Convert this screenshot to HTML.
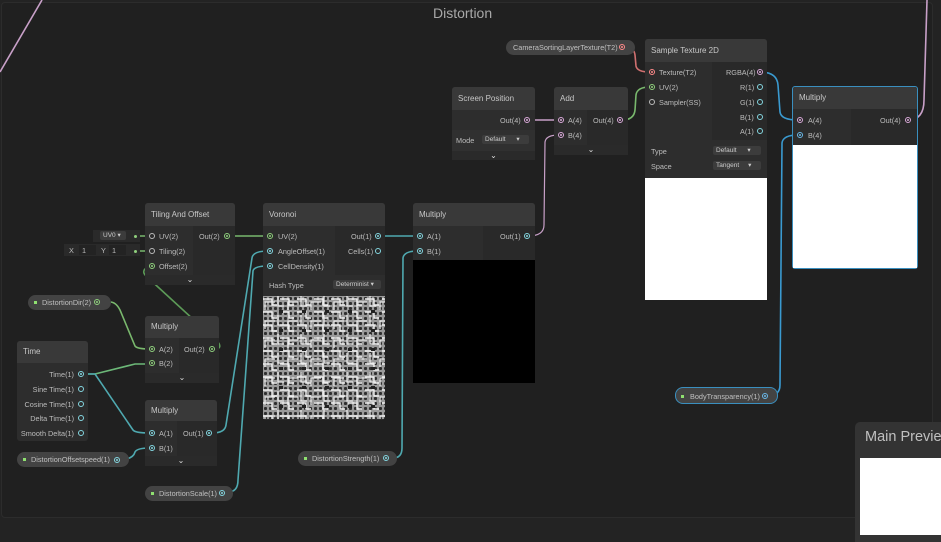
<!DOCTYPE html>
<html><head><meta charset="utf-8"><style>
*{margin:0;padding:0;box-sizing:border-box}
body{width:941px;height:535px;background:#232323;position:relative;overflow:hidden;font-family:"Liberation Sans",sans-serif;color:#bdbdbd}
.a{position:absolute}
.grp{left:1px;top:2px;width:932px;height:516px;background:#202020;border:1px solid #2c2c2c;border-radius:4px}
.bx{position:absolute;background:#2d2d2d;border-radius:3px}
.hd{position:absolute;background:#393939;font-size:8px;color:#c8c8c8;padding-left:6px;border-radius:3px 3px 0 0}
.r{position:absolute;background:#292929}
.t{position:absolute;font-size:7.3px;color:#bcbcbc;white-space:nowrap;line-height:9px}
.tr{text-align:right}
.p{position:absolute;width:6px;height:6px;border-radius:50%;border:1px solid #84e4e7}
.p.f::after{content:"";position:absolute;left:1px;top:1px;width:2px;height:2px;border-radius:50%;background:currentColor}
.g{border-color:#8fd07d;color:#8fd07d}.c{border-color:#84d6e0;color:#84d6e0}.k{border-color:#d8a8d8;color:#d8a8d8}.rd{border-color:#ff8a8a;color:#ff8a8a}.w{border-color:#bbb}
.cb{position:absolute;background:#2a2a2a;font-size:8px;color:#ddd;text-align:center;line-height:10px}
.pill{position:absolute;background:#434343;border-radius:8px;font-size:7.3px;color:#c0c0c0;white-space:nowrap}
.dd{position:absolute;background:#3c3c3c;font-size:6.5px;color:#ccc;padding-left:3px;line-height:9px;border-radius:2px}
</style></head><body>
<div class="a grp"></div>
<div class="a" style="left:433px;top:5px;font-size:14px;color:#a8a8a8">Distortion</div>

<svg class="a" style="left:0;top:0" width="941" height="535" fill="none" stroke-width="1.6">
<path d="M42 0 L0 72" stroke="#c8a0c8"/>
<path d="M908 120 Q924 120 924 100 L927 0" stroke="#c8a0c8"/>
<path d="M229 236 L268 236" stroke="#79b86d"/>
<path d="M127 236 L150 236 M127 251 L150 251" stroke="#79b86d"/>
<path d="M150 266 Q140 270 146 276 L218 342 Q223 349 214 349" stroke="#5c9a57"/>
<path d="M110 302 Q116 302 120 310 L135 346 Q137 349 150 349" stroke="#79b86d"/>
<path d="M82 374 L95 374 L135 364 L150 364" stroke="#6cb878"/>
<path d="M82 374 L95 374 L133 430 Q135 433 150 433" stroke="#4fa9b0"/>
<path d="M117 460 Q133 460 135 452 Q137 448 150 448" stroke="#4fa9b0"/>
<path d="M212 433 Q225 433 226 425 L252 258 Q253 251 268 251" stroke="#4fa9b0"/>
<path d="M228 492 Q238 492 238 480 L253 271 Q254 266 268 266" stroke="#4fa9b0"/>
<path d="M380 236 L418 236" stroke="#4fa9b0"/>
<path d="M393 458 Q402 458 402 448 L403 258 Q404 251 418 251" stroke="#4fa9b0"/>
<path d="M528 236 Q544 236 544 225 L545 142 Q546 135 559 135" stroke="#c8a0c8" stroke-width="1.2"/>
<path d="M528 120 L559 120" stroke="#c8a0c8"/>
<path d="M622 120 Q634 120 635 110 L636 95 Q637 87 650 87" stroke="#79b86d"/>
<path d="M625 47 Q634 47 635 55 L636 66 Q637 72 650 72" stroke="#d07070"/>
<path d="M760 72 Q777 72 778 85 L780 112 Q781 120 798 120" stroke="#3a9ad0"/>
<path d="M767 396 Q780 396 780 385 L782 143 Q783 135 798 135" stroke="#3a9ad0"/>
</svg>

<!-- Tiling and offset -->
<div class="bx" style="left:145px;top:203px;width:90px;height:82px"></div>
<div class="hd" style="left:145px;top:203px;width:90px;height:23px;line-height:23px">Tiling And Offset</div>
<div class="r" style="left:193px;top:226px;width:42px;height:49px"></div>
<div class="cb" style="left:145px;top:275px;width:90px;height:10px">⌄</div>
<div class="p w g" style="left:149px;top:233px"></div><div class="t" style="left:159px;top:232px">UV(2)</div>
<div class="p w g" style="left:149px;top:248px"></div><div class="t" style="left:159px;top:247px">Tiling(2)</div>
<div class="p f g" style="left:149px;top:263px"></div><div class="t" style="left:159px;top:262px">Offset(2)</div>
<div class="t" style="left:199px;top:232px">Out(2)</div><div class="p f g" style="left:224px;top:233px"></div>
<div class="a" style="left:93px;top:230px;width:47px;height:12px;background:#2a2a2a"></div>
<div class="dd" style="left:100px;top:231px;width:26px">UV0 ▾</div>
<div class="a" style="left:134px;top:235px;width:3px;height:3px;background:#8fd07d;border-radius:50%"></div>
<div class="a" style="left:64px;top:244px;width:76px;height:12px;background:#2a2a2a"></div>
<div class="t" style="left:69px;top:246px">X</div><div class="a" style="left:79px;top:245px;width:17px;height:10px;background:#232323"></div><div class="t" style="left:82px;top:246px">1</div>
<div class="t" style="left:101px;top:246px">Y</div><div class="a" style="left:109px;top:245px;width:17px;height:10px;background:#232323"></div><div class="t" style="left:112px;top:246px">1</div>
<div class="a" style="left:134px;top:250px;width:3px;height:3px;background:#8fd07d;border-radius:50%"></div>

<!-- Voronoi -->
<div class="bx" style="left:263px;top:203px;width:122px;height:217px"></div>
<div class="hd" style="left:263px;top:203px;width:122px;height:23px;line-height:23px">Voronoi</div>
<div class="r" style="left:335px;top:226px;width:50px;height:49px"></div>
<div class="p f c" style="left:267px;top:233px;border-color:#8fd07d;color:#8fd07d"></div><div class="t" style="left:278px;top:232px">UV(2)</div>
<div class="p f c" style="left:267px;top:248px"></div><div class="t" style="left:278px;top:247px">AngleOffset(1)</div>
<div class="p f c" style="left:267px;top:263px"></div><div class="t" style="left:278px;top:262px">CellDensity(1)</div>
<div class="t" style="left:351px;top:232px">Out(1)</div><div class="p f c" style="left:375px;top:233px"></div>
<div class="t" style="left:348px;top:247px">Cells(1)</div><div class="p c" style="left:375px;top:248px"></div>
<div class="t" style="left:269px;top:281px">Hash Type</div>
<div class="dd" style="left:333px;top:280px;width:48px">Determinist ▾</div>
<svg class="a" style="left:263px;top:296px" width="122" height="123">
<defs>
<pattern id="v" width="5" height="5" patternUnits="userSpaceOnUse"><rect width="5" height="5" fill="#9a9a9a"/><rect x="1" y="1" width="3" height="3" rx="1" fill="#2e2e2e"/></pattern>
<pattern id="v2" width="17" height="13" patternUnits="userSpaceOnUse"><path d="M0 3 L9 3 L9 9 L14 9" stroke="#f2f2f2" stroke-width="1.4" fill="none"/></pattern>
<pattern id="v3" width="23" height="19" patternUnits="userSpaceOnUse"><path d="M2 14 L2 6 L12 6 M15 0 L15 10 L21 10" stroke="#e8e8e8" stroke-width="1.3" fill="none"/><rect x="16" y="14" width="4" height="3" fill="#222"/></pattern>
</defs>
<rect width="122" height="123" fill="url(#v)"/><rect width="122" height="123" fill="url(#v2)"/><rect width="122" height="123" fill="url(#v3)"/></svg>

<!-- Multiply middle -->
<div class="bx" style="left:413px;top:203px;width:122px;height:180px"></div>
<div class="hd" style="left:413px;top:203px;width:122px;height:23px;line-height:23px">Multiply</div>
<div class="r" style="left:483px;top:226px;width:52px;height:34px"></div>
<div class="a" style="left:413px;top:260px;width:122px;height:123px;background:#000"></div>
<div class="p f c" style="left:417px;top:233px"></div><div class="t" style="left:427px;top:232px">A(1)</div>
<div class="p f c" style="left:417px;top:248px"></div><div class="t" style="left:427px;top:247px">B(1)</div>
<div class="t" style="left:500px;top:232px">Out(1)</div><div class="p f c" style="left:524px;top:233px"></div>

<!-- Screen position -->
<div class="bx" style="left:452px;top:87px;width:83px;height:73px"></div>
<div class="hd" style="left:452px;top:87px;width:83px;height:23px;line-height:23px">Screen Position</div>
<div class="t" style="left:500px;top:116px">Out(4)</div><div class="p f k" style="left:524px;top:117px"></div>
<div class="r" style="left:452px;top:130px;width:83px;height:21px;background:#303030"></div>
<div class="t" style="left:456px;top:136px">Mode</div><div class="dd" style="left:482px;top:135px;width:47px">Default&nbsp;&nbsp;&nbsp;&nbsp;&nbsp;&nbsp;▾</div>
<div class="cb" style="left:452px;top:151px;width:83px;height:9px">⌄</div>

<!-- Add -->
<div class="bx" style="left:554px;top:87px;width:74px;height:68px"></div>
<div class="hd" style="left:554px;top:87px;width:74px;height:23px;line-height:23px">Add</div>
<div class="r" style="left:587px;top:110px;width:41px;height:35px"></div>
<div class="p f k" style="left:558px;top:117px"></div><div class="t" style="left:568px;top:116px">A(4)</div>
<div class="p f k" style="left:558px;top:132px"></div><div class="t" style="left:568px;top:131px">B(4)</div>
<div class="t" style="left:593px;top:116px">Out(4)</div><div class="p f k" style="left:617px;top:117px"></div>
<div class="cb" style="left:554px;top:145px;width:74px;height:10px">⌄</div>

<!-- Sample Texture -->
<div class="bx" style="left:645px;top:39px;width:122px;height:261px"></div>
<div class="hd" style="left:645px;top:39px;width:122px;height:23px;line-height:23px">Sample Texture 2D</div>
<div class="r" style="left:712px;top:62px;width:55px;height:78px"></div>
<div class="p f rd" style="left:649px;top:69px"></div><div class="t" style="left:659px;top:68px">Texture(T2)</div>
<div class="p f g" style="left:649px;top:84px"></div><div class="t" style="left:659px;top:83px">UV(2)</div>
<div class="p w" style="left:649px;top:99px"></div><div class="t" style="left:659px;top:98px">Sampler(SS)</div>
<div class="t" style="left:726px;top:68px">RGBA(4)</div><div class="p f k" style="left:757px;top:69px"></div>
<div class="t" style="left:740px;top:83px">R(1)</div><div class="p c" style="left:757px;top:84px"></div>
<div class="t" style="left:740px;top:98px">G(1)</div><div class="p c" style="left:757px;top:99px"></div>
<div class="t" style="left:740px;top:113px">B(1)</div><div class="p c" style="left:757px;top:114px"></div>
<div class="t" style="left:740px;top:127px">A(1)</div><div class="p c" style="left:757px;top:128px"></div>
<div class="t" style="left:651px;top:147px">Type</div><div class="dd" style="left:713px;top:146px;width:48px">Default&nbsp;&nbsp;&nbsp;&nbsp;&nbsp;&nbsp;▾</div>
<div class="t" style="left:651px;top:162px">Space</div><div class="dd" style="left:713px;top:161px;width:48px">Tangent&nbsp;&nbsp;&nbsp;&nbsp;&nbsp;▾</div>
<div class="a" style="left:645px;top:178px;width:122px;height:122px;background:#fff"></div>

<!-- Multiply right -->
<div class="bx" style="left:792px;top:86px;width:126px;height:183px;border:1px solid #3a8fbf"></div>
<div class="hd" style="left:793px;top:87px;width:124px;height:22px;line-height:22px">Multiply</div>
<div class="r" style="left:851px;top:109px;width:66px;height:36px"></div>
<div class="p f k" style="left:797px;top:117px"></div><div class="t" style="left:808px;top:116px">A(4)</div>
<div class="p f" style="left:797px;top:132px;border-color:#6ab8e8;color:#6ab8e8"></div><div class="t" style="left:808px;top:131px">B(4)</div>
<div class="t" style="left:880px;top:116px">Out(4)</div><div class="p f k" style="left:905px;top:117px"></div>
<div class="a" style="left:793px;top:145px;width:124px;height:123px;background:#fff"></div>

<!-- Multiply A2 B2 -->
<div class="bx" style="left:145px;top:316px;width:74px;height:67px"></div>
<div class="hd" style="left:145px;top:316px;width:74px;height:22px;line-height:22px">Multiply</div>
<div class="r" style="left:179px;top:338px;width:40px;height:35px"></div>
<div class="p f g" style="left:149px;top:346px"></div><div class="t" style="left:159px;top:345px">A(2)</div>
<div class="p f g" style="left:149px;top:360px"></div><div class="t" style="left:159px;top:359px">B(2)</div>
<div class="t" style="left:184px;top:345px">Out(2)</div><div class="p f g" style="left:209px;top:346px"></div>
<div class="cb" style="left:145px;top:373px;width:74px;height:10px">⌄</div>

<!-- Time -->
<div class="bx" style="left:17px;top:341px;width:71px;height:100px"></div>
<div class="hd" style="left:17px;top:341px;width:71px;height:22px;line-height:22px">Time</div>
<div class="t tr" style="left:17px;width:57px;top:370px">Time(1)</div><div class="p f c" style="left:78px;top:371px"></div>
<div class="t tr" style="left:17px;width:57px;top:385px">Sine Time(1)</div><div class="p c" style="left:78px;top:386px"></div>
<div class="t tr" style="left:17px;width:57px;top:400px">Cosine Time(1)</div><div class="p c" style="left:78px;top:401px"></div>
<div class="t tr" style="left:17px;width:57px;top:414px">Delta Time(1)</div><div class="p c" style="left:78px;top:415px"></div>
<div class="t tr" style="left:17px;width:57px;top:429px">Smooth Delta(1)</div><div class="p c" style="left:78px;top:430px"></div>

<!-- Multiply A1 B1 -->
<div class="bx" style="left:145px;top:400px;width:72px;height:66px"></div>
<div class="hd" style="left:145px;top:400px;width:72px;height:21px;line-height:21px">Multiply</div>
<div class="r" style="left:177px;top:421px;width:40px;height:35px"></div>
<div class="p f c" style="left:149px;top:430px"></div><div class="t" style="left:159px;top:429px">A(1)</div>
<div class="p f c" style="left:149px;top:445px"></div><div class="t" style="left:159px;top:444px">B(1)</div>
<div class="t" style="left:183px;top:429px">Out(1)</div><div class="p f c" style="left:206px;top:430px"></div>
<div class="cb" style="left:145px;top:456px;width:72px;height:10px">⌄</div>

<!-- pills -->
<div class="pill" style="left:28px;top:295px;width:83px;height:15px;line-height:15px;padding-left:14px">DistortionDir(2)</div>
<div class="a" style="left:34px;top:301px;width:3px;height:3px;background:#8fe070"></div><div class="p f g" style="left:94px;top:299px"></div>
<div class="pill" style="left:17px;top:452px;width:112px;height:15px;line-height:15px;padding-left:14px">DistortionOffsetspeed(1)</div>
<div class="a" style="left:23px;top:458px;width:3px;height:3px;background:#8fe070"></div><div class="p f c" style="left:114px;top:457px"></div>
<div class="pill" style="left:145px;top:486px;width:88px;height:15px;line-height:15px;padding-left:14px">DistortionScale(1)</div>
<div class="a" style="left:151px;top:492px;width:3px;height:3px;background:#8fe070"></div><div class="p f c" style="left:219px;top:490px"></div>
<div class="pill" style="left:298px;top:451px;width:99px;height:15px;line-height:15px;padding-left:14px">DistortionStrength(1)</div>
<div class="a" style="left:304px;top:457px;width:3px;height:3px;background:#8fe070"></div><div class="p f c" style="left:383px;top:455px"></div>
<div class="pill" style="left:506px;top:40px;width:129px;height:15px;line-height:15px;padding-left:7px">CameraSortingLayerTexture(T2)</div>
<div class="p f rd" style="left:619px;top:44px"></div>
<div class="pill" style="left:675px;top:387px;width:103px;height:17px;line-height:17px;padding-left:14px;border:1px solid #3a8fbf">BodyTransparency(1)</div>
<div class="a" style="left:681px;top:395px;width:3px;height:3px;background:#8fe070"></div><div class="p f" style="left:762px;top:393px;border-color:#6ab8e8;color:#6ab8e8"></div>

<!-- main preview -->
<div class="a" style="left:855px;top:422px;width:90px;height:120px;background:#333;border-radius:5px 0 0 0"></div>
<div class="a" style="left:865px;top:429px;font-size:14.5px;color:#c0c0c0;white-space:nowrap">Main Preview</div>
<div class="a" style="left:860px;top:458px;width:81px;height:77px;background:#fff"></div>
</body></html>
